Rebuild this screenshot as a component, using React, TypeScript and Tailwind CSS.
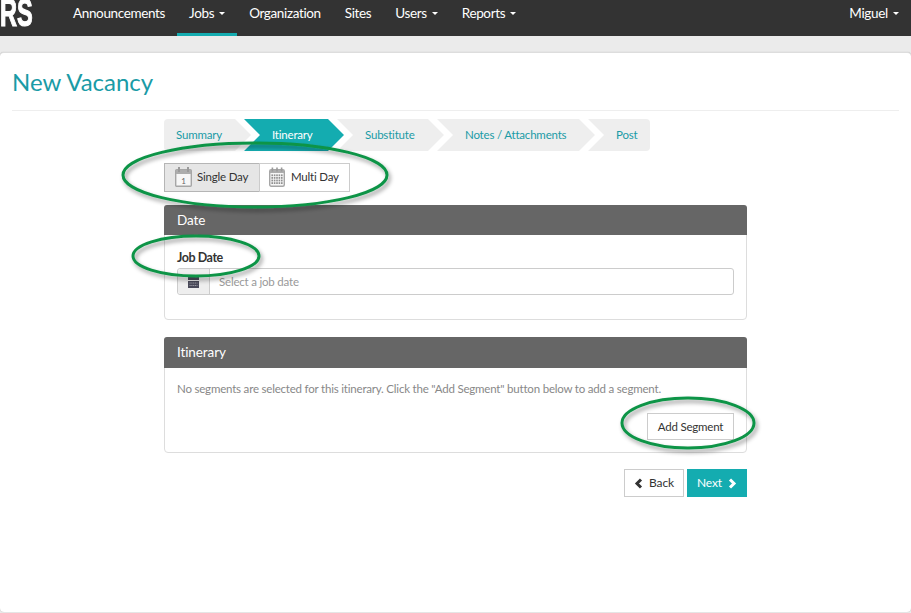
const font = "font-['Lato','Noto_Sans',sans-serif]"

const navItems = [
  { label: "Announcements" },
  { label: "Jobs", caret: true, active: true },
  { label: "Organization" },
  { label: "Sites" },
  { label: "Users", caret: true },
  { label: "Reports", caret: true },
]

function Caret() {
  return <span className="ml-[5px] inline-block border-x-[3px] border-t-[3px] border-x-transparent border-t-white align-middle" />
}

function Nav() {
  return (
    <nav className="flex h-9 items-stretch justify-between overflow-hidden bg-[#333333] text-white">
      <div className="flex items-stretch">
        <div className="w-[61px] origin-left scale-x-[0.62] text-[38px] leading-[26px] font-bold [-webkit-text-stroke:1.2px_white] [font-family:'Liberation_Sans',sans-serif]">RS</div>
        {navItems.map((item) => (
          <a
            key={item.label}
            className={`flex items-center border-b-[3px] px-3 pb-[7px] text-[13.5px] tracking-[-0.36px] ${item.active ? "border-[#14acb0]" : "border-transparent"}`}
          >
            {item.label}
            {item.caret && <Caret />}
          </a>
        ))}
      </div>
      <a className="flex items-center pr-3 pb-[10px] text-[13.5px] tracking-[-0.3px]">
        Miguel
        <Caret />
      </a>
    </nav>
  )
}

const steps = [
  { label: "Summary", w: "w-[87px]", pl: "pl-3", first: true },
  { label: "Itinerary", w: "w-[100px]", pl: "pl-7", active: true },
  { label: "Substitute", w: "w-[107px]", pl: "pl-7" },
  { label: "Notes / Attachments", w: "w-[158px]", pl: "pl-7" },
  { label: "Post", w: "w-[62px]", pl: "pl-7", last: true },
]

function Wizard() {
  return (
    <div className="ml-[164px] flex h-8">
      {steps.map((s) => (
        <div
          key={s.label}
          className={`flex items-center text-[11.5px] tracking-[-0.2px] ${s.w} ${s.pl} ${
            s.active ? "bg-[#14acb0] text-white" : "bg-[#eeeeee] text-[#1a9ba6]"
          } ${
            s.first
              ? "rounded-l-[4px] [clip-path:polygon(0_0,calc(100%-16px)_0,100%_50%,calc(100%-16px)_100%,0_100%)]"
              : s.last
                ? "-ml-[7px] rounded-r-[4px] [clip-path:polygon(0_0,100%_0,100%_100%,0_100%,16px_50%)]"
                : "-ml-[7px] [clip-path:polygon(0_0,calc(100%-16px)_0,100%_50%,calc(100%-16px)_100%,0_100%,16px_50%)]"
          }`}
        >
          {s.label}
        </div>
      ))}
    </div>
  )
}

function CalendarOne() {
  return (
    <svg width="17" height="20" viewBox="0 0 17 20" className="mr-[5px]">
      <rect x="0.7" y="2.7" width="15.6" height="16.6" rx="1" fill="#f7f7f7" stroke="#a6a6a6" strokeWidth="1.4" />
      <rect x="1" y="3" width="15" height="4" fill="#adadad" />
      <rect x="3" y="0" width="2" height="5" fill="#9a9a9a" />
      <rect x="12" y="0" width="2" height="5" fill="#9a9a9a" />
      <text x="8.5" y="16.5" textAnchor="middle" fontSize="8" fill="#666" fontFamily="Lato, sans-serif">1</text>
    </svg>
  )
}

function CalendarGrid() {
  const cells = []
  for (let r = 0; r < 4; r++) {
    for (let c = 0; c < 5; c++) {
      cells.push(<rect key={`${r}-${c}`} x={2.4 + c * 2.4} y={7.4 + r * 2.6} width="1.6" height="1.8" fill="#909090" />)
    }
  }
  return (
    <svg width="16" height="20" viewBox="0 0 16 20" className="mr-[6px]">
      <rect x="0.7" y="2.7" width="14.6" height="16.6" rx="1.5" fill="#f7f7f7" stroke="#a6a6a6" strokeWidth="1.4" />
      <rect x="1" y="3" width="14" height="3" fill="#adadad" />
      <rect x="2.6" y="0.5" width="1.6" height="4" fill="#9a9a9a" />
      <rect x="7.2" y="0.5" width="1.6" height="4" fill="#9a9a9a" />
      <rect x="11.8" y="0.5" width="1.6" height="4" fill="#9a9a9a" />
      {cells}
    </svg>
  )
}

function DayToggle() {
  return (
    <div className="mt-3 ml-[164px] flex h-[29px] w-[186px] text-[11.5px] tracking-[-0.2px] text-[#333]">
      <button className="flex w-[96px] items-center border border-[#b5b5b5] bg-[#e6e6e6] pb-px pl-[10px]">
        <CalendarOne />
        Single Day
      </button>
      <button className="-ml-px flex flex-1 items-center border border-[#cccccc] bg-white pb-px pl-[9px]">
        <CalendarGrid />
        Multi Day
      </button>
    </div>
  )
}

function Panel({ title, className, headClass, children }: { title: string; className: string; headClass: string; children: React.ReactNode }) {
  return (
    <section className={`mx-[164px] w-[583px] rounded-[4px] border border-[#dddddd] bg-white ${className}`}>
      <h3 className={`-mx-px -mt-px flex items-center rounded-t-[3px] bg-[#666666] px-[13px] text-[13.5px] tracking-[-0.1px] text-white ${headClass}`}>{title}</h3>
      {children}
    </section>
  )
}

function Ellipses() {
  const list = [
    { cx: 255, cy: 175, rx: 132, ry: 32 },
    { cx: 196, cy: 256, rx: 63, ry: 20 },
    { cx: 688, cy: 423, rx: 66, ry: 25 },
  ]
  return (
    <svg width="911" height="613" className="pointer-events-none absolute top-0 left-0">
      <defs>
        <filter id="sh" x="-10%" y="-20%" width="120%" height="150%">
          <feDropShadow dx="2" dy="3" stdDeviation="2" floodColor="#000" floodOpacity="0.4" />
        </filter>
      </defs>
      {list.map((e) => (
        <ellipse key={e.cx} {...e} fill="none" stroke="#0f9447" strokeWidth="3" filter="url(#sh)" />
      ))}
    </svg>
  )
}

export default function App() {
  return (
    <div className={`relative h-[613px] w-[911px] overflow-hidden bg-[#ebebeb] ${font}`}>
      <Nav />
      <main className="mt-4 h-[560px] rounded-[4px] border-t border-[#dddddd] bg-white shadow-[0_0_1px_#aaaaaa]">
        <h1 className="ml-3 pt-[13px] text-[24px] leading-[32px] text-[#1a9ba6]">New Vacancy</h1>
        <hr className="mx-3 mt-3 mb-2 border-[#eeeeee]" />
        <Wizard />
        <DayToggle />
        <Panel title="Date" headClass="h-[30px]" className="mt-[13px] h-[115px]">
          <div className="px-3 pt-[15px]">
            <label className="block text-[12.5px] leading-[16px] font-bold tracking-[-0.45px] text-[#333]">Job Date</label>
            <div className="mt-[2px] flex h-[27px] rounded-[3px] border border-[#cccccc] text-[11.5px] tracking-[-0.2px]">
              <span className="flex w-[32px] items-center justify-center rounded-l-[3px] border-r border-[#cccccc] bg-[#eeeeee] pt-[2px]">
                <svg width="11" height="11" viewBox="0 0 11 11">
                  <rect x="0" y="0" width="11" height="3" fill="#4a4a5a" />
                  <rect x="0" y="4" width="11" height="7" fill="#4a4a5a" />
                  <path d="M1.5 6h8M1.5 8.5h8" stroke="#b0b0b8" strokeWidth="0.8" strokeDasharray="1.2 0.6" />
                </svg>
              </span>
              <span className="flex items-center pl-[9px] text-[#999999]">Select a job date</span>
            </div>
          </div>
        </Panel>
        <Panel title="Itinerary" headClass="h-[31px]" className="mt-[17px] h-[116px]">
          <div className="px-3 pt-[13px]">
            <p className="text-[11.5px] leading-[16px] tracking-[-0.2px] text-[#888888]">
              No segments are selected for this itinerary. Click the "Add Segment" button below to add a segment.
            </p>
            <div className="mt-[16px] flex justify-end">
              <button className="h-[27px] w-[87px] border border-[#cccccc] bg-white text-[11.5px] tracking-[-0.2px] text-[#333]">Add Segment</button>
            </div>
          </div>
        </Panel>
        <div className="mt-4 ml-[164px] flex w-[583px] justify-end gap-[3px] text-[12px] tracking-[-0.1px]">
          <button className="flex h-7 w-[60px] items-center justify-center border border-[#cccccc] bg-white text-[#333]">
            <svg width="9" height="11" viewBox="0 0 9 11" className="mr-[6px]">
              <path d="M7 1.5 3 5.5l4 4" fill="none" stroke="#333" strokeWidth="3" />
            </svg>
            Back
          </button>
          <button className="flex h-7 w-[60px] items-center justify-center bg-[#14acb0] text-white">
            Next
            <svg width="9" height="11" viewBox="0 0 9 11" className="ml-[6px]">
              <path d="M2 1.5l4 4-4 4" fill="none" stroke="#fff" strokeWidth="3" />
            </svg>
          </button>
        </div>
      </main>
      <Ellipses />
    </div>
  )
}
